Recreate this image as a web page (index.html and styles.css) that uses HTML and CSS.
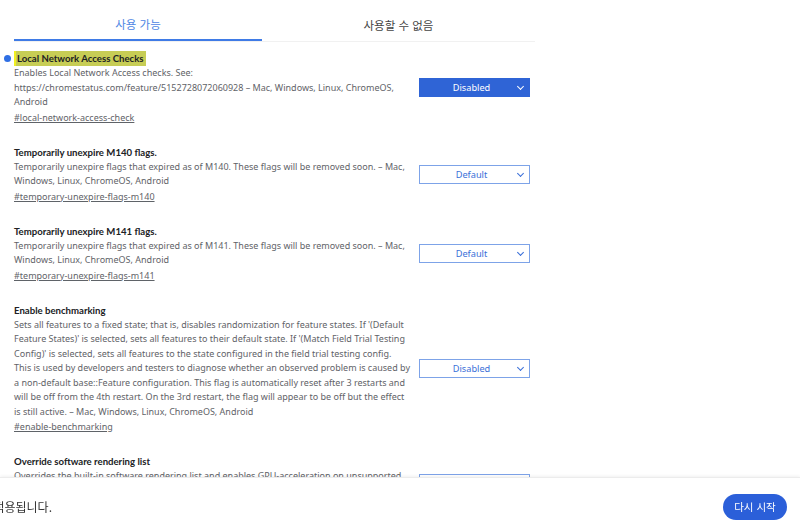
FILE: index.html
```html
<!DOCTYPE html>
<html lang="ko">
<head>
    <meta charset="UTF-8">
    <meta name="viewport" content="width=device-width, initial-scale=1.0">
    <title>Experiments</title>
    <link rel="stylesheet" href="styles.css">
</head>
<body>
    <div class="page">
        <div class="tabs">
            <div class="tab tab-active">사용 가능</div>
            <div class="tab tab-other">사용할 수 없음</div>
        </div>

        <div class="experiment">
            <div class="exp-text">
                <div class="exp-title"><span class="dot"></span><span class="hl">Local Network Access Checks</span></div>
                <div class="exp-desc">Enables Local Network Access checks. See: https://chromestatus.com/feature/5152728072060928 – Mac, Windows, Linux, ChromeOS, Android</div>
                <a class="exp-link" href="#local-network-access-check">#local-network-access-check</a>
            </div>
            <div class="select select-on">Disabled<span class="chev"></span></div>
        </div>

        <div class="experiment">
            <div class="exp-text">
                <div class="exp-title">Temporarily unexpire M140 flags.</div>
                <div class="exp-desc">Temporarily unexpire flags that expired as of M140. These flags will be removed soon. – Mac, Windows, Linux, ChromeOS, Android</div>
                <a class="exp-link" href="#temporary-unexpire-flags-m140">#temporary-unexpire-flags-m140</a>
            </div>
            <div class="select">Default<span class="chev"></span></div>
        </div>

        <div class="experiment">
            <div class="exp-text">
                <div class="exp-title">Temporarily unexpire M141 flags.</div>
                <div class="exp-desc">Temporarily unexpire flags that expired as of M141. These flags will be removed soon. – Mac, Windows, Linux, ChromeOS, Android</div>
                <a class="exp-link" href="#temporary-unexpire-flags-m141">#temporary-unexpire-flags-m141</a>
            </div>
            <div class="select">Default<span class="chev"></span></div>
        </div>

        <div class="experiment">
            <div class="exp-text">
                <div class="exp-title">Enable benchmarking</div>
                <div class="exp-desc">Sets all features to a fixed state; that is, disables randomization for feature states. If '(Default Feature States)' is selected, sets all features to their default state. If '(Match Field Trial Testing Config)' is selected, sets all features to the state configured in the field trial testing config. This is used by developers and testers to diagnose whether an observed problem is caused by a non-default base::Feature configuration. This flag is automatically reset after 3 restarts and will be off from the 4th restart. On the 3rd restart, the flag will appear to be off but the effect is still active. – Mac, Windows, Linux, ChromeOS, Android</div>
                <a class="exp-link" href="#enable-benchmarking">#enable-benchmarking</a>
            </div>
            <div class="select">Disabled<span class="chev"></span></div>
        </div>

        <div class="experiment">
            <div class="exp-text">
                <div class="exp-title">Override software rendering list</div>
                <div class="exp-desc">Overrides the built-in software rendering list and enables GPU-acceleration on unsupported system configurations. – Mac, Windows, Linux, ChromeOS, Android</div>
                <a class="exp-link" href="#ignore-gpu-blocklist">#ignore-gpu-blocklist</a>
            </div>
            <div class="select">Disabled<span class="chev"></span></div>
        </div>
    </div>

    <div class="relaunch-bar">
        <div class="relaunch-msg"><span>변경사항은 Chrome을 다시 시작하면 적용됩니다.</span></div>
        <button class="relaunch-btn">다시 시작</button>
    </div>
</body>
</html>
```

FILE: styles.css
```css
* {
    margin: 0;
    padding: 0;
    box-sizing: border-box;
}

html, body {
    height: 100%;
    overflow: hidden;
}

body {
    background: #fff;
    font-family: 'Noto Sans', 'Noto Sans CJK KR', sans-serif;
    color: #202124;
}

.page {
    width: 535px;
    padding-left: 14px;
}

.tabs {
    display: flex;
    height: 42px;
    border-bottom: 1px solid #f1f1f1;
}

.tab {
    display: flex;
    align-items: center;
    justify-content: center;
    font-family: 'Noto Sans CJK KR', sans-serif;
    font-size: 11.5px;
    padding-top: 8px;
}

.tab-active {
    width: 248px;
    color: #4e86e4;
    border-bottom: 2px solid #3f7be6;
}

.tab-other {
    flex: 1;
    color: #444;
}

.experiment {
    display: flex;
    align-items: center;
    padding-top: 20px;
}

.tabs + .experiment {
    padding-top: 9px;
}

.exp-text {
    width: 396px;
    margin-right: 9px;
}

.exp-title {
    position: relative;
    font-family: 'Lato', sans-serif;
    font-size: 9.6px;
    font-weight: 700;
    line-height: 15px;
    color: #202124;
}

.dot {
    position: absolute;
    left: -10px;
    top: 4px;
    width: 7px;
    height: 7px;
    border-radius: 50%;
    background: #2f6fe4;
}

.hl {
    background: #c7cd55;
    border-left: 2px solid #f2f020;
    padding: 2px 2px 2px 1px;
}

.exp-desc {
    font-size: 9px;
    line-height: 14.5px;
    color: #5f6368;
}

.exp-link {
    display: block;
    width: fit-content;
    font-size: 9px;
    line-height: 15px;
    color: #5f6368;
}

.select {
    position: relative;
    width: 111px;
    height: 19px;
    flex-shrink: 0;
    display: flex;
    align-items: center;
    justify-content: center;
    font-size: 9.2px;
    color: #3a6fd8;
    border: 1px solid #7da3e8;
    background: #fff;
    padding-right: 6px;
}

.select-on {
    background: #2f64d6;
    border-color: #2f64d6;
    color: #fff;
}

.chev {
    position: absolute;
    right: 6px;
    top: 5px;
    width: 5px;
    height: 5px;
    border-right: 1.8px solid currentColor;
    border-bottom: 1.8px solid currentColor;
    transform: rotate(45deg);
}

.relaunch-bar {
    position: fixed;
    left: 0;
    right: 0;
    bottom: 0;
    height: 48px;
    background: #fff;
    border-top: 1px solid #ececec;
    box-shadow: 0 -1px 3px rgba(0, 0, 0, 0.06);
    display: flex;
    align-items: center;
    justify-content: space-between;
    padding-right: 13px;
    padding-top: 10px;
}

.relaunch-msg {
    width: 52px;
    display: flex;
    justify-content: flex-end;
    white-space: nowrap;
    font-family: 'Noto Sans CJK KR', sans-serif;
    font-size: 12px;
    color: #333;
}

.relaunch-btn {
    width: 64px;
    height: 26px;
    border: none;
    border-radius: 13px;
    background: #2b5fd9;
    color: #fff;
    font-family: 'Noto Sans CJK KR', sans-serif;
    font-size: 10.5px;
}
```
